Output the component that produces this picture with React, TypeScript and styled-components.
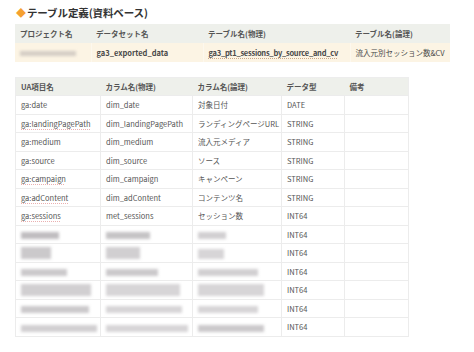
import React from 'react';
import styled, { createGlobalStyle } from 'styled-components';

const GlobalStyle = createGlobalStyle`
  html, body {
    margin: 0;
    padding: 0;
    background: #ffffff;
  }
  body {
    font-family: "Noto Sans CJK JP", "Noto Sans", sans-serif;
    color: #444;
  }
`;

type Blur = { w: number; h?: number; shade?: number };

interface ColumnRow {
    ua?: string;
    physical?: string;
    logical?: string;
    type: string;
    squiggle?: boolean;
    blur?: [Blur, Blur, Blur];
}

const rows: ColumnRow[] = [
    { ua: 'ga:date', physical: 'dim_date', logical: '対象日付', type: 'DATE' },
    { ua: 'ga:landingPagePath', physical: 'dim_landingPagePath', logical: 'ランディングページURL', type: 'STRING', squiggle: true },
    { ua: 'ga:medium', physical: 'dim_medium', logical: '流入元メディア', type: 'STRING' },
    { ua: 'ga:source', physical: 'dim_source', logical: 'ソース', type: 'STRING' },
    { ua: 'ga:campaign', physical: 'dim_campaign', logical: 'キャンペーン', type: 'STRING', squiggle: true },
    { ua: 'ga:adContent', physical: 'dim_adContent', logical: 'コンテンツ名', type: 'STRING', squiggle: true },
    { ua: 'ga:sessions', physical: 'met_sessions', logical: 'セッション数', type: 'INT64', squiggle: true },
    { type: 'INT64', blur: [{ w: 38, shade: 0.55 }, { w: 44, shade: 0.5 }, { w: 28, shade: 0.4 }] },
    { type: 'INT64', blur: [{ w: 30, h: 12, shade: 0.45 }, { w: 34, h: 12, shade: 0.4 }, { w: 26, h: 10, shade: 0.35 }] },
    { type: 'INT64', blur: [{ w: 46, shade: 0.45 }, { w: 52, shade: 0.45 }, { w: 60, shade: 0.4 }] },
    { type: 'INT64', blur: [{ w: 70, h: 12, shade: 0.4 }, { w: 74, h: 12, shade: 0.35 }, { w: 66, h: 12, shade: 0.35 }] },
    { type: 'INT64', blur: [{ w: 68, shade: 0.45 }, { w: 76, shade: 0.35 }, { w: 60, shade: 0.35 }] },
    { type: 'INT64', blur: [{ w: 76, shade: 0.4 }, { w: 82, shade: 0.35 }, { w: 66, shade: 0.45 }] },
];

const App: React.FC = () => (
    <>
        <GlobalStyle />
        <Page>
            <Title>
                <Diamond>◆</Diamond>テーブル定義(資料ベース)
            </Title>

            <SummaryTable>
                <colgroup>
                    <col style={{ width: 76 }} />
                    <col style={{ width: 112 }} />
                    <col style={{ width: 147 }} />
                    <col style={{ width: 100 }} />
                </colgroup>
                <thead>
                    <tr>
                        <HeadCell>プロジェクト名</HeadCell>
                        <HeadCell>データセット名</HeadCell>
                        <HeadCell>テーブル名(物理)</HeadCell>
                        <HeadCell>テーブル名(論理)</HeadCell>
                    </tr>
                </thead>
                <tbody>
                    <SummaryRow>
                        <SummaryCell><BlurBlock $w={56} $h={5} $shade={0.35} /></SummaryCell>
                        <SummaryCell $strong>ga3_exported_data</SummaryCell>
                        <SummaryCell $strong $underline>ga3_pt1_sessions_by_source_and_cv</SummaryCell>
                        <SummaryCell>流入元別セッション数&amp;CV</SummaryCell>
                    </SummaryRow>
                </tbody>
            </SummaryTable>

            <ColumnTable>
                <colgroup>
                    <col style={{ width: 85 }} />
                    <col style={{ width: 92 }} />
                    <col style={{ width: 89 }} />
                    <col style={{ width: 63 }} />
                    <col style={{ width: 64 }} />
                </colgroup>
                <thead>
                    <tr>
                        <ColHead>UA項目名</ColHead>
                        <ColHead>カラム名(物理)</ColHead>
                        <ColHead>カラム名(論理)</ColHead>
                        <ColHead>データ型</ColHead>
                        <ColHead>備考</ColHead>
                    </tr>
                </thead>
                <tbody>
                    {rows.map((r, i) => (
                        <tr key={i}>
                            <Cell>
                                {r.blur ? <BlurBlock $w={r.blur[0].w} $h={r.blur[0].h} $shade={r.blur[0].shade} /> : <UaName $squiggle={r.squiggle}>{r.ua}</UaName>}
                            </Cell>
                            <Cell>
                                {r.blur ? <BlurBlock $w={r.blur[1].w} $h={r.blur[1].h} $shade={r.blur[1].shade} /> : r.physical}
                            </Cell>
                            <Cell>
                                {r.blur ? <BlurBlock $w={r.blur[2].w} $h={r.blur[2].h} $shade={r.blur[2].shade} /> : r.logical}
                            </Cell>
                            <Cell>{r.type}</Cell>
                            <Cell />
                        </tr>
                    ))}
                </tbody>
            </ColumnTable>
        </Page>
    </>
);

const Page = styled.div`
  width: 474px;
  height: 352px;
  box-sizing: border-box;
  padding: 5px 0 0 15px;
  overflow: hidden;
`;

const Title = styled.h2`
  display: flex;
  align-items: center;
  margin: 0 0 4px 1px;
  font-size: 10.5px;
  font-weight: 700;
  color: #333;
  line-height: 15px;
  letter-spacing: -0.1px;
`;

const Diamond = styled.span`
  color: #f5a030;
  font-size: 10px;
  margin-right: 1px;
`;

const SummaryTable = styled.table`
  border-collapse: collapse;
  table-layout: fixed;
  width: 435px;
  margin-bottom: 15px;
`;

const HeadCell = styled.th`
  background: #eef0eb;
  height: 18.5px;
  padding: 0 5px;
  text-align: left;
  font-size: 7.5px;
  font-weight: 600;
  color: #555;
  white-space: nowrap;
`;

const SummaryRow = styled.tr`
  background: #fcf4e4;
`;

const SummaryCell = styled.td<{ $strong?: boolean; $underline?: boolean }>`
  height: 19px;
  padding: 0 5px;
  font-size: 7.5px;
  font-weight: ${p => (p.$strong ? 600 : 400)};
  color: #4a4a4a;
  white-space: nowrap;
  border-left: 1px solid #fdf8ee;
  text-decoration: ${p => (p.$underline ? 'underline dotted #c8a88a' : 'none')};
  text-underline-offset: 2px;
  letter-spacing: ${p => (p.$underline ? '-0.25px' : '0')};

  &:first-child {
    border-left: none;
  }
`;

const ColumnTable = styled.table`
  border-collapse: collapse;
  table-layout: fixed;
  width: 393px;
  border: 1px solid #ededed;
`;

const ColHead = styled.th`
  background: #eef0eb;
  height: 17.5px;
  padding: 0 5px;
  text-align: left;
  font-size: 7.5px;
  font-weight: 600;
  color: #555;
  white-space: nowrap;
`;

const Cell = styled.td`
  height: 17.5px;
  padding: 0 5px;
  font-size: 7.5px;
  color: #555;
  white-space: nowrap;
  border: 1px solid #ececec;
`;

const UaName = styled.span<{ $squiggle?: boolean }>`
  text-decoration: ${p => (p.$squiggle ? 'underline dotted #eab0b0' : 'none')};
  text-decoration-thickness: 1px;
  text-underline-offset: 2px;
`;

const BlurBlock = styled.span<{ $w: number; $h?: number; $shade?: number }>`
  display: inline-block;
  vertical-align: middle;
  width: ${p => p.$w}px;
  height: ${p => p.$h ?? 7}px;
  background: rgba(140, 135, 140, ${p => p.$shade ?? 0.4});
  filter: blur(1.5px);
`;

export default App;
